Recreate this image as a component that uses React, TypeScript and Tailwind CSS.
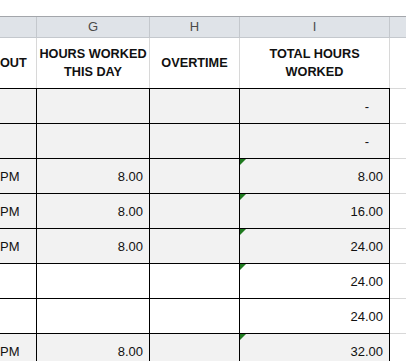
import React from "react";

type Row = {
  out: string;
  hours: string;
  total: string;
  shaded: boolean;
  flag: boolean;
};

const rows: Row[] = [
  { out: "", hours: "", total: "-", shaded: true, flag: false },
  { out: "", hours: "", total: "-", shaded: true, flag: false },
  { out: "PM", hours: "8.00", total: "8.00", shaded: true, flag: true },
  { out: "PM", hours: "8.00", total: "16.00", shaded: true, flag: true },
  { out: "PM", hours: "8.00", total: "24.00", shaded: true, flag: true },
  { out: "", hours: "", total: "24.00", shaded: false, flag: true },
  { out: "", hours: "", total: "24.00", shaded: false, flag: false },
  { out: "PM", hours: "8.00", total: "32.00", shaded: true, flag: true },
];

const font = { fontFamily: '"Liberation Sans", Arial, sans-serif' };

function Flag() {
  return (
    <svg className="absolute left-0 top-0" width="6" height="6" viewBox="0 0 6 6">
      <polygon points="0,0 6,0 0,6" fill="#1f7a1f" />
    </svg>
  );
}

export default function App() {
  return (
    <div className="w-[406px] h-[361px] overflow-hidden bg-white text-[#111]" style={font}>
      <div className="h-[16px]" />
      {/* column letters */}
      <div className="flex h-[22px] border-y border-t-[#a3a6ab] border-b-[#c4c8cd] bg-[#dfe3e8] text-[13px] text-[#4a4a4a]">
        <div className="w-[37px] border-r border-[#c4c8cd]" />
        <div className="w-[113px] border-r border-[#c4c8cd] flex items-center justify-center">G</div>
        <div className="w-[90px] border-r border-[#c4c8cd] flex items-center justify-center">H</div>
        <div className="w-[150px] border-r border-[#c4c8cd] flex items-center justify-center">I</div>
        <div className="flex-1" />
      </div>
      {/* titles */}
      <div className="flex h-[50px] text-[12.7px] font-bold leading-[18px] text-[#111]">
        <div className="w-[37px] border-r border-[#d8d8d8] flex items-center whitespace-nowrap">OUT</div>
        <div className="w-[113px] border-r border-[#d8d8d8] flex items-center justify-center text-center">
          HOURS WORKED
          <br />
          THIS DAY
        </div>
        <div className="w-[90px] border-r border-[#d8d8d8] flex items-center justify-center">OVERTIME</div>
        <div className="w-[150px] border-r border-[#d8d8d8] flex items-center justify-center text-center">
          TOTAL HOURS
          <br />
          WORKED
        </div>
        <div className="flex-1" />
      </div>
      {/* data */}
      {rows.map((r, i) => {
        const fill = r.shaded ? "bg-[#f2f2f2]" : "bg-white";
        return (
          <div key={i} className="flex h-[35px] text-[13px] leading-[15px]">
            <div className={`w-[37px] border-t border-r border-black flex items-center whitespace-nowrap ${fill}`}>
              {r.out}
            </div>
            <div className={`w-[113px] border-t border-r border-black flex items-center justify-end pr-[6px] ${fill}`}>
              {r.hours}
            </div>
            <div className={`w-[90px] border-t border-r border-black ${fill}`} />
            <div
              className={`relative w-[150px] border-t border-r border-black flex items-center justify-end ${
                r.total === "-" ? "pr-[20px]" : "pr-[6px]"
              } ${fill}`}
            >
              {r.flag && <Flag />}
              {r.total}
            </div>
            <div className="flex-1 border-t border-[#d8d8d8]" />
          </div>
        );
      })}
    </div>
  );
}
